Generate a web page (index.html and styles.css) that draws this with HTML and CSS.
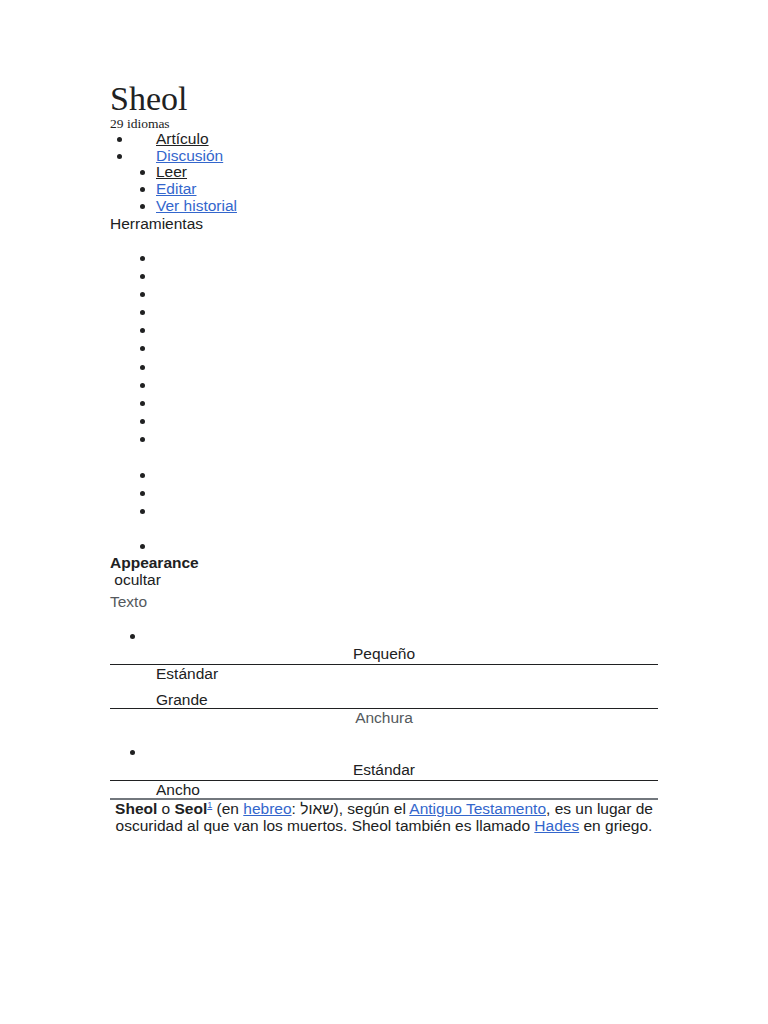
FILE: index.html
```html
<!DOCTYPE html>
<html lang="es">
<head>
<meta charset="utf-8">
<title>Sheol</title>
<link rel="stylesheet" href="styles.css">
</head>
<body>
<main class="page">
  <h1 class="title">Sheol</h1>
  <div class="langs">29 idiomas</div>
  <ul class="tabs tabs-ns">
    <li><a class="tab-link current" href="#">Artículo</a></li>
    <li><a class="tab-link" href="#">Discusión</a></li>
  </ul>
  <ul class="tabs tabs-views">
    <li><a class="tab-link current" href="#">Leer</a></li>
    <li><a class="tab-link" href="#">Editar</a></li>
    <li><a class="tab-link" href="#">Ver historial</a></li>
  </ul>
  <div class="tools-label">Herramientas</div>
  <ul class="tools tools-first">
    <li></li><li></li><li></li><li></li><li></li><li></li><li></li><li></li><li></li><li></li><li></li>
  </ul>
  <ul class="tools tools-second">
    <li></li><li></li><li></li>
  </ul>
  <ul class="tools tools-third">
    <li></li>
  </ul>
  <div class="appearance">Appearance</div>
  <div class="hide-btn">&nbsp;ocultar</div>
  <div class="group-label first-group">Texto</div>
  <ul class="opt-list"><li></li></ul>
  <div class="opt centered ruled">Pequeño</div>
  <div class="opt indented">Estándar</div>
  <div class="opt indented ruled-plain">Grande</div>
  <div class="group-label centered">Anchura</div>
  <ul class="opt-list"><li></li></ul>
  <div class="opt centered ruled">Estándar</div>
  <div class="opt indented ruled-gray">Ancho</div>
  <p class="intro"><b>Sheol</b> o <b>Seol</b><sup class="ref"><a href="#">1</a></sup> (en <a href="#">hebreo</a>: <span lang="he">שאול</span>), según el <a href="#">Antiguo Testamento</a>, es un lugar de oscuridad al que van los muertos. Sheol también es llamado <a href="#">Hades</a> en griego.</p>
</main>
</body>
</html>
```

FILE: styles.css
```css
html, body {
  margin: 0;
  padding: 0;
  background: #ffffff;
}

.page {
  margin: 0 110px;
  padding-top: 80px;
  color: #202122;
  font-family: "Liberation Sans", Arial, sans-serif;
  font-size: 15.5px;
  line-height: 16.7px;
}

a {
  color: #3366cc;
  text-decoration: underline;
}

.title {
  margin: 0;
  font-family: "Liberation Serif", "Times New Roman", serif;
  font-weight: normal;
  font-size: 34px;
  line-height: 37px;
  color: #202122;
}

.langs {
  font-family: "Liberation Serif", "Times New Roman", serif;
  font-size: 13.5px;
  line-height: 14px;
}

.tabs {
  margin: 0;
  padding: 0 0 0 46px;
}

.tabs-ns li {
  margin-left: -23px;
  padding-left: 23px;
}

.tab-link.current {
  color: #202122;
}

.tools-label {
  line-height: 17px;
}

.tools {
  margin: 0;
  padding: 0 0 0 46px;
}

.tools li {
  height: 18.2px;
  line-height: 18.2px;
}

.tools-first,
.tools-second,
.tools-third {
  margin-top: 17px;
}

.appearance {
  font-weight: bold;
  line-height: 16.5px;
}

.hide-btn {
  line-height: 16.5px;
}

.group-label {
  color: #54595d;
  line-height: 17px;
}

.first-group {
  margin-top: 5px;
}

.opt-list {
  margin: 0;
  padding: 0 0 0 36px;
}

.opt-list li {
  height: 18px;
  line-height: 18px;
  margin-top: 17px;
}

.opt {
  line-height: 17px;
}

.centered {
  text-align: center;
}

.indented {
  padding-left: 46px;
}

.ruled {
  border-bottom: 1px solid #202122;
  padding-bottom: 2px;
}

.ruled-plain {
  border-bottom: 1px solid #202122;
}

.ruled-gray {
  border-bottom: 2px solid #72777d;
}

.opt.indented + .opt.indented {
  margin-top: 9px;
}

.intro {
  margin: 0;
  text-align: center;
  line-height: 17px;
}

.ref {
  font-size: 9px;
  line-height: 0;
}
```
